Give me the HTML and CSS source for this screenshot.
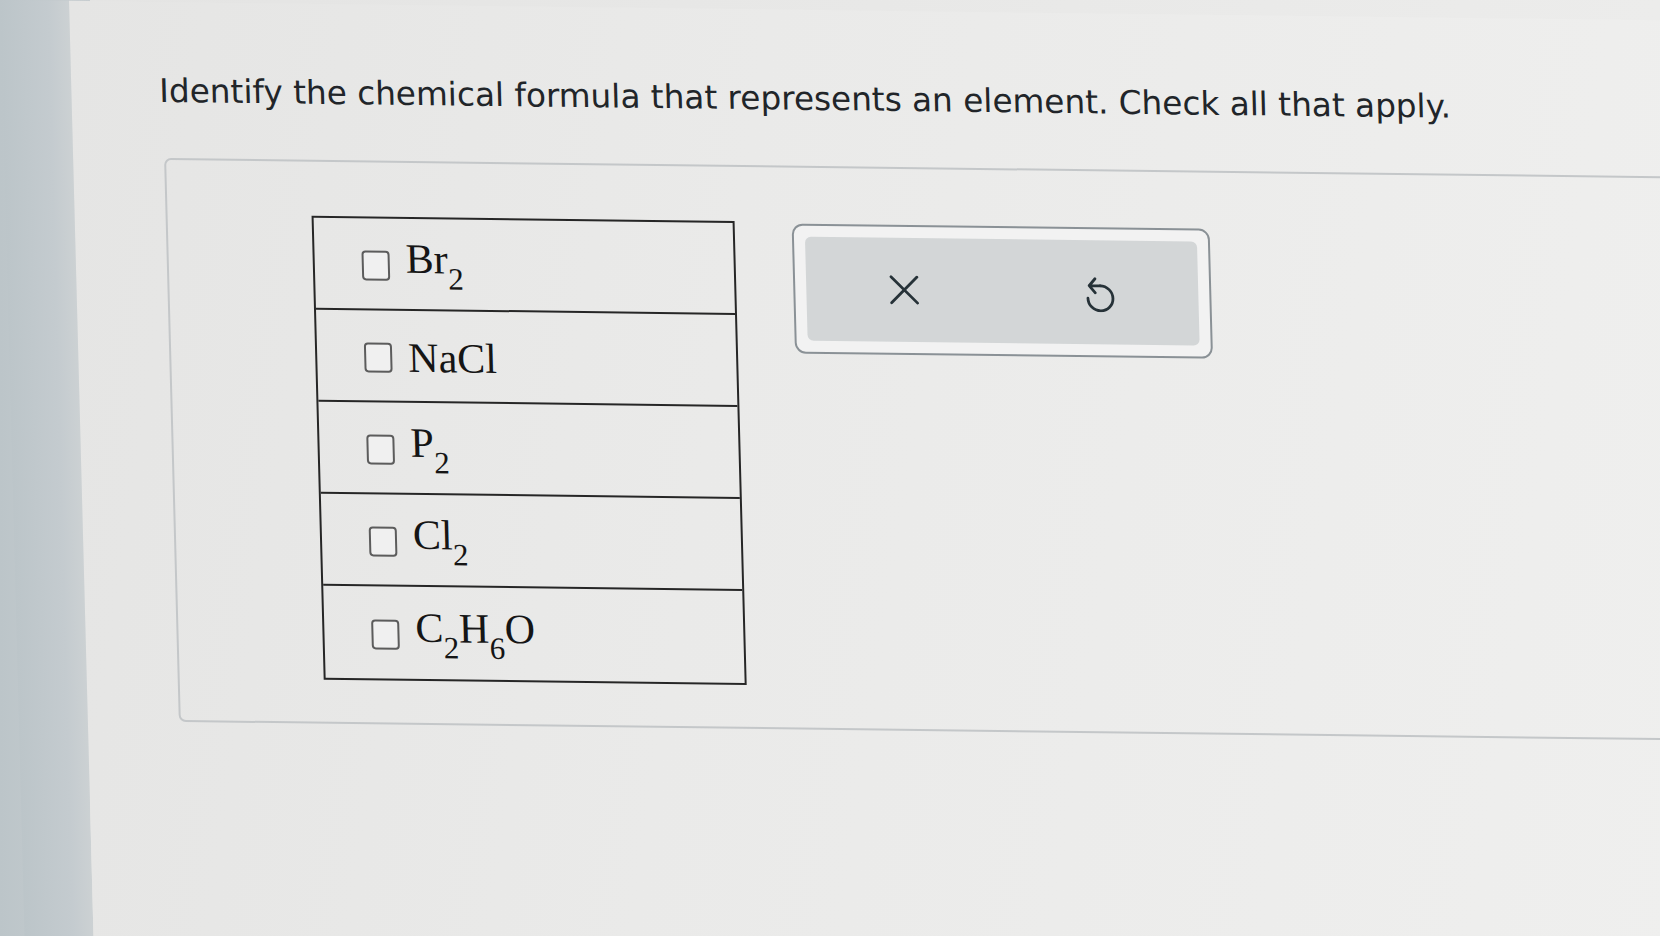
FILE: index.html
```html
<!DOCTYPE html>
<html lang="en">
<head>
    <meta charset="UTF-8">
    <meta name="viewport" content="width=device-width, initial-scale=1.0">
    <title>Check all that apply</title>
    <link rel="stylesheet" href="styles.css">
</head>
<body>
    <div class="screen">
        <div class="bezel"></div>

        <main class="page">
            <p class="prompt">Identify the chemical formula that represents an element. Check all that apply.</p>

            <div class="answer-area">
                <div class="choices">
                    <label class="choice">
                        <input type="checkbox">
                        <span class="formula">Br<sub>2</sub></span>
                    </label>
                    <label class="choice">
                        <input type="checkbox">
                        <span class="formula">NaCl</span>
                    </label>
                    <label class="choice">
                        <input type="checkbox">
                        <span class="formula">P<sub>2</sub></span>
                    </label>
                    <label class="choice">
                        <input type="checkbox">
                        <span class="formula">Cl<sub>2</sub></span>
                    </label>
                    <label class="choice">
                        <input type="checkbox">
                        <span class="formula">C<sub>2</sub>H<sub>6</sub>O</span>
                    </label>
                </div>

                <div class="tools">
                    <div class="tools-inner">
                        <button class="tool" aria-label="Clear">
                            <svg width="30" height="30" viewBox="0 0 30 30">
                                <path d="M2 2 L28 28 M28 2 L2 28"/>
                            </svg>
                        </button>
                        <button class="tool tool-undo" aria-label="Undo">
                            <svg width="32" height="36" viewBox="0 0 32 36">
                                <path d="M16 9.5 A12.5 12.5 0 1 1 3.5 22"/>
                                <path d="M16 9.5 H5 M11 2.5 L5 9.5 L11 16.5"/>
                            </svg>
                        </button>
                    </div>
                </div>
            </div>
        </main>
    </div>
</body>
</html>
```

FILE: styles.css
```css
* {
    margin: 0;
    padding: 0;
    box-sizing: border-box;
}

html,
body {
    height: 100%;
    overflow: hidden;
}

html {
    background: linear-gradient(to right, #bcc5c9 0, #c7cdd0 90px, #e4e4e3 90px, #ececeb 100%);
}

/* the photo is taken a little off-axis, so the whole screen leans */
.screen {
    display: flex;
    width: 1660px;
    height: 936px;
    transform: skew(1.5deg, 0.7deg);
    transform-origin: 0 0;
}

.bezel {
    width: 69px;
    flex-shrink: 0;
    background: linear-gradient(to right, #bcc5c9 0%, #c4cbcf 70%, #ccd1d3 100%);
}

.page {
    flex: 1;
    min-width: 0;
    padding: 70px 0 0 88px;
    background: linear-gradient(100deg, #e5e5e4 0%, #eaeae9 40%, #efefee 100%);
}

.prompt {
    font-family: "DejaVu Sans", Verdana, sans-serif;
    font-size: 32.7px;
    line-height: 1.2;
    color: #212529;
    white-space: nowrap;
}

.answer-area {
    display: flex;
    align-items: flex-start;
    gap: 57px;
    height: 564px;
    margin: 47px -80px 0 3px;
    padding: 54px 0 0 144px;
    border: 2px solid #c4c7c9;
    border-radius: 7px;
}

.choices {
    width: 423px;
    flex-shrink: 0;
    border: 2px solid #262626;
}

.choice {
    display: flex;
    align-items: center;
    gap: 16px;
    height: 92px;
    padding: 4px 0 0 47px;
    border-bottom: 2px solid #262626;
}

.choice:last-child {
    border-bottom: none;
}

.choice input {
    appearance: none;
    -webkit-appearance: none;
    flex-shrink: 0;
    width: 28px;
    height: 30px;
    margin: 0;
    border: 2px solid #5c5c5c;
    border-radius: 4px;
    background: #f0f0f0;
}

.formula {
    font-family: "Liberation Serif", "Times New Roman", serif;
    font-size: 42px;
    line-height: 1;
    color: #151515;
}

.formula sub {
    font-size: 31px;
    line-height: 1;
    vertical-align: -16px;
}

.tools {
    flex-shrink: 0;
    width: 418px;
    height: 130px;
    margin-top: 2px;
    padding: 11px;
    border: 2px solid #8a9196;
    border-radius: 11px;
    background: #f2f2f2;
}

.tools-inner {
    display: grid;
    grid-template-columns: 1fr 1fr;
    height: 100%;
    background: #d3d6d7;
    border-radius: 6px;
}

.tool {
    display: flex;
    align-items: center;
    justify-content: center;
    background: none;
    border: none;
    color: #263238;
    cursor: pointer;
}

.tool svg {
    fill: none;
    stroke: currentColor;
    stroke-width: 2.8;
    stroke-linecap: round;
    stroke-linejoin: round;
}

.tool-undo svg {
    margin-top: 4px;
}
```
